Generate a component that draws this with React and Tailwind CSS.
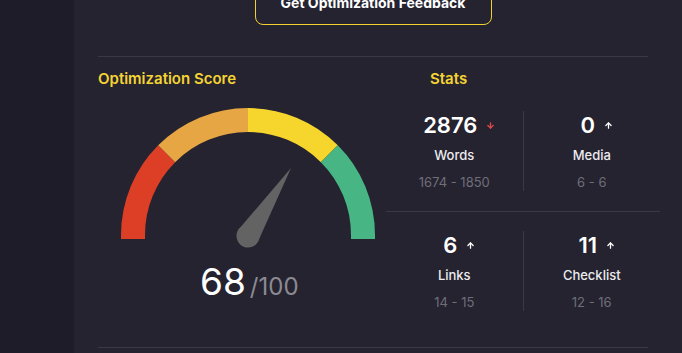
import React from "react";
import { ArrowUp, ArrowDown } from "lucide-react";

const font = { fontFamily: "Inter, 'Noto Sans', sans-serif" };

function Gauge() {
  return (
    <svg width="260" height="146" viewBox="0 0 260 146" className="block">
      <path d="M3,134 L3,130 A127,127 0 0 1 40.2,40.2 L57.17,57.17 A103,103 0 0 0 27,130 L27,134 Z" fill="#dc3f25" />
      <path d="M40.2,40.2 A127,127 0 0 1 130,3 L130,27 A103,103 0 0 0 57.17,57.17 Z" fill="#e5a643" />
      <path d="M130,3 A127,127 0 0 1 219.8,40.2 L202.83,57.17 A103,103 0 0 0 130,27 Z" fill="#f6d62c" />
      <path d="M219.8,40.2 A127,127 0 0 1 257,130 L257,134 L233,134 L233,130 A103,103 0 0 0 202.83,57.17 Z" fill="#47b584" />
      <polygon points="139.7,137.2 120.3,124.8 173,63" fill="#636363" />
      <circle cx="130" cy="131" r="11.5" fill="#636363" />
    </svg>
  );
}

function Stat({ value, label, range, down, border }) {
  return (
    <div className={`flex-1 h-[80px] flex flex-col items-center ${border ? "border-l border-[#3a3946]" : ""}`}>
      <div className="flex items-center h-[28px] pl-[10px]">
        <span className="text-[22px] font-semibold text-white leading-[28px]">{value}</span>
        {down ? (
          <ArrowDown size={9} strokeWidth={3.5} className="ml-[9px] text-[#e04a4a]" />
        ) : (
          <ArrowUp size={9} strokeWidth={3.5} className="ml-[9px] text-white" />
        )}
      </div>
      <div className="mt-[6px] text-[13px] leading-[20px] font-medium text-[#ececef]">{label}</div>
      <div className="mt-[7px] text-[13px] leading-[20px] text-[#6f6e79]">{range}</div>
    </div>
  );
}

export default function App() {
  return (
    <div className="flex w-[682px] h-[353px] overflow-hidden bg-[#252330]" style={font}>
      <div className="w-[74px] shrink-0 h-full bg-[#1d1c28]" />
      <div className="flex-1 h-full pl-[24px]">
        <div className="w-[550px]">
          <div className="flex justify-center">
            <div className="-mt-[21px] h-[46px] w-[237px] border border-[#f3d230] rounded-lg flex items-center justify-center text-[14px] font-bold text-white">
              Get Optimization Feedback
            </div>
          </div>
          <div className="mt-[31px] h-px bg-[#393845]" />
          <div className="flex">
            <div className="w-[288px] shrink-0">
              <div className="mt-[12px] text-[15px] leading-[20px] font-semibold text-[#f5d432]">Optimization Score</div>
              <div className="mt-[16px] ml-[20px]">
                <Gauge />
              </div>
              <div className="flex items-baseline ml-[102px] mt-[9px]">
                <span className="text-[37px] leading-[44px] text-white">68</span>
                <span className="ml-[4px] text-[24px] text-[#8b8a92]">/100</span>
              </div>
            </div>
            <div className="w-[274px] shrink-0">
              <div className="mt-[12px] ml-[44px] text-[15px] leading-[20px] font-semibold text-[#f5d432]">Stats</div>
              <div className="mt-[22px] flex">
                <Stat value="2876" label="Words" range="1674 - 1850" down />
                <Stat value="0" label="Media" range="6 - 6" border />
              </div>
              <div className="mt-[20px] h-px bg-[#393845]" />
              <div className="mt-[19px] flex">
                <Stat value="6" label="Links" range="14 - 15" />
                <Stat value="11" label="Checklist" range="12 - 16" border />
              </div>
            </div>
          </div>
          <div className="mt-[36px] h-px bg-[#393845]" />
        </div>
      </div>
    </div>
  );
}
